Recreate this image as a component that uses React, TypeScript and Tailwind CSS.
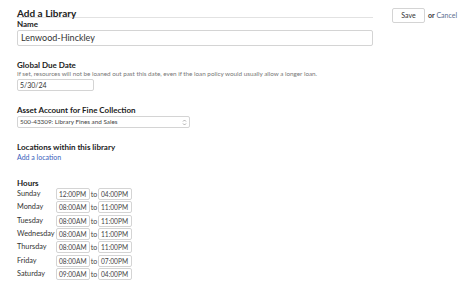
import React from "react";

const hours = [
  { day: "Sunday", open: "12:00PM", close: "04:00PM" },
  { day: "Monday", open: "08:00AM", close: "11:00PM" },
  { day: "Tuesday", open: "08:00AM", close: "11:00PM" },
  { day: "Wednesday", open: "08:00AM", close: "11:00PM" },
  { day: "Thursday", open: "08:00AM", close: "11:00PM" },
  { day: "Friday", open: "08:00AM", close: "07:00PM" },
  { day: "Saturday", open: "09:00AM", close: "04:00PM" },
];

function TimeBox({ value }: { value: string }) {
  return (
    <div className="w-[34px] h-[12px] border border-[#d4d4d4] rounded-[2px] px-[2px] text-[6.6px] leading-[10px] text-[#444] whitespace-nowrap overflow-hidden">
      {value}
    </div>
  );
}

export default function App() {
  return (
    <div
      className="w-[474px] h-[296px] bg-white text-[#333] flex pl-[17px]"
      style={{ fontFamily: "Lato, 'Open Sans', sans-serif" }}
    >
      {/* form column */}
      <div className="w-[356px] flex flex-col">
        <div className="h-[18px] pt-[8px] border-b border-[#e2e2e2]">
          <h1 className="text-[10px] leading-[10px] font-bold text-[#222]">Add a Library</h1>
        </div>

        <label className="mt-[1px] text-[8px] leading-[10px] font-bold text-[#222]">Name</label>
        <div className="mt-[1px] h-[16px] border border-[#d4d4d4] rounded-[2px] px-[3px] text-[9px] leading-[14px] text-[#333]">
          Lenwood-Hinckley
        </div>

        <label className="mt-[14px] text-[8px] leading-[10px] font-bold text-[#222]">Global Due Date</label>
        <p className="text-[6.3px] leading-[8px] text-[#777] whitespace-nowrap">
          If set, resources will not be loaned out past this date, even if the loan policy would usually allow a longer loan.
        </p>
        <div className="mt-[1px] w-[77px] h-[12px] border border-[#d4d4d4] rounded-[2px] px-[2px] text-[7px] leading-[10px] text-[#333]">
          5/30/24
        </div>

        <label className="mt-[14px] text-[8px] leading-[10px] font-bold text-[#222]">Asset Account for Fine Collection</label>
        <div className="mt-[1px] w-[173px] h-[12px] border border-[#d4d4d4] rounded-[2px] pl-[2px] pr-[2px] flex items-center justify-between text-[6.3px] leading-[10px] text-[#444]">
          <span>500-43309: Library Fines and Sales</span>
          <svg width="5" height="7" viewBox="0 0 5 7" fill="none" stroke="#999" strokeWidth="0.8">
            <path d="M1 2.5 L2.5 1 L4 2.5" />
            <path d="M1 4.5 L2.5 6 L4 4.5" />
          </svg>
        </div>

        <label className="mt-[14px] text-[8px] leading-[10px] font-bold text-[#222]">Locations within this library</label>
        <a className="mt-[1px] text-[7px] leading-[9px] text-[#3a5fbd]">Add a location</a>

        <label className="mt-[16px] text-[8px] leading-[10px] font-bold text-[#222]">Hours</label>
        <div className="flex flex-col gap-[1.33px]">
          {hours.map((h) => (
            <div key={h.day} className="flex items-center h-[12px]">
              <span className="w-[39px] text-[7.3px] leading-[10px] text-[#333] whitespace-nowrap">{h.day}</span>
              <TimeBox value={h.open} />
              <span className="w-[8px] text-center text-[7px] leading-[10px] text-[#444]">to</span>
              <TimeBox value={h.close} />
            </div>
          ))}
        </div>
      </div>

      {/* actions */}
      <div className="ml-[19px] pt-[8px] flex items-start">
        <button className="w-[33px] h-[15px] border border-[#d4d4d4] rounded-[2px] bg-white text-[7px] leading-[13px] text-[#333]">
          Save
        </button>
        <span className="ml-[3px] mt-[3px] text-[7px] leading-[9px]">
          <span className="font-bold text-[#333]">or</span>{" "}
          <a className="text-[#5a6e8f]">Cancel</a>
        </span>
      </div>
    </div>
  );
}
